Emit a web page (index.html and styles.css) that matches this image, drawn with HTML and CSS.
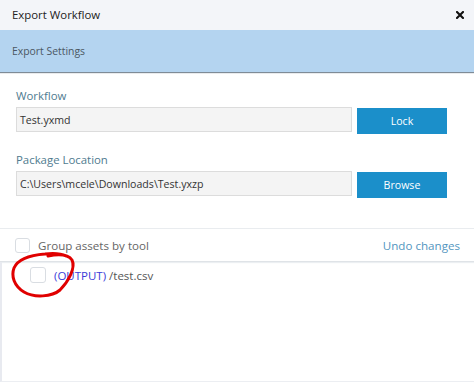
FILE: index.html
```html
<!DOCTYPE html>
<html>
<head>
<meta charset="utf-8">
<link rel="stylesheet" href="styles.css">
</head>
<body>
<div class="dialog">
  <div class="titlebar">
    <span class="title">Export Workflow</span>
    <svg class="close" width="8" height="8" viewBox="0 0 8 8"><path d="M1 1L7 7M7 1L1 7" stroke="#111" stroke-width="2.1" stroke-linecap="square"/></svg>
  </div>
  <div class="band">Export Settings</div>
  <div class="form">
    <div class="field">
      <div class="label">Workflow</div>
      <div class="row">
        <div class="input">Test.yxmd</div>
        <div class="btn">Lock</div>
      </div>
    </div>
    <div class="field">
      <div class="label">Package Location</div>
      <div class="row">
        <div class="input">C:\Users\mcele\Downloads\Test.yxzp</div>
        <div class="btn">Browse</div>
      </div>
    </div>
  </div>
  <div class="toolbar">
    <label class="group"><span class="check"></span><span>Group assets by tool</span></label>
    <span class="undo">Undo changes</span>
  </div>
  <div class="list">
    <div class="item">
      <span class="check"></span>
      <span class="tag">(OUTPUT)</span><span class="path">&nbsp;/test.csv</span>
    </div>
    <svg class="scribble" width="80" height="60" viewBox="0 0 80 60"><path d="M40 6 C50 4 60 4 64 10 C68 18 60 32 52 40 C44 47 26 48 16 42 C6 36 3 26 6 18 C10 9 24 5 37 4 C46 3 54 4 58 6" fill="none" stroke="#e00000" stroke-width="3" stroke-linecap="round"/></svg>
  </div>
</div>
</body>
</html>
```

FILE: styles.css
```css
html, body {
  margin: 0;
  padding: 0;
  background: #ffffff;
}
body {
  width: 474px;
  height: 382px;
  overflow: hidden;
  font-family: "Open Sans", "Noto Sans", sans-serif;
}
.dialog {
  display: flex;
  flex-direction: column;
  height: 382px;
}
.titlebar {
  height: 30px;
  flex: none;
  background: #f3f5f9;
  display: flex;
  align-items: center;
  justify-content: space-between;
  padding: 0 10px 0 12px;
  font-size: 11.4px;
  color: #222;
}
.title {
  margin-top: -1px;
}
.close {
  display: block;
}
.band {
  height: 42px;
  flex: none;
  background: #b4d4f0;
  display: flex;
  align-items: center;
  padding-left: 12px;
  font-size: 10.4px;
  color: #4b5763;
  box-shadow: 0 1px 1px #7f8b96;
  position: relative;
  z-index: 1;
}
.form {
  padding: 16px 27px 0 16px;
  display: flex;
  flex-direction: column;
  gap: 18px;
  height: 140px;
  flex: none;
  border-bottom: 1px solid #e9ecef;
}
.label {
  font-size: 11.4px;
  color: #4f7b8f;
  line-height: 16px;
  margin-bottom: 3px;
}
.row {
  display: flex;
  gap: 5px;
  align-items: flex-start;
}
.input {
  width: 336px;
  height: 25px;
  box-sizing: border-box;
  background: #f4f4f4;
  border: 1px solid #dcdcdc;
  font-size: 10.6px;
  color: #333;
  padding-left: 3px;
  display: flex;
  align-items: center;
}
.btn {
  width: 90px;
  height: 26px;
  margin-top: 1px;
  background: #1b8fca;
  color: #fff;
  font-size: 10.6px;
  display: flex;
  align-items: center;
  justify-content: center;
}
.toolbar {
  height: 32px;
  flex: none;
  display: flex;
  align-items: center;
  justify-content: space-between;
  padding: 0 14px 0 15px;
  border-bottom: 1px solid #dfe3e7;
  box-shadow: 0 1px 1px #eceff2;
}
.group {
  display: flex;
  align-items: center;
  gap: 8px;
  font-size: 11.6px;
  color: #666;
}
.undo {
  font-size: 11.6px;
  color: #5396c0;
}
.check {
  width: 15px;
  height: 15px;
  box-sizing: border-box;
  border: 1px solid #d9dde2;
  border-radius: 3px;
  background: #fff;
  flex: none;
}
.list {
  flex: 1;
  position: relative;
  border-left: 2px solid #e8eaf0;
  border-bottom: 1px solid #eceef2;
}
.item {
  display: flex;
  align-items: center;
  height: 26px;
  padding-left: 28px;
  font-size: 11.5px;
}
.item .check {
  width: 16px;
  height: 16px;
  margin-right: 8px;
}
.tag {
  color: #3b3bd8;
}
.path {
  color: #555;
}
.scribble {
  position: absolute;
  left: 6px;
  top: -12px;
}
```
